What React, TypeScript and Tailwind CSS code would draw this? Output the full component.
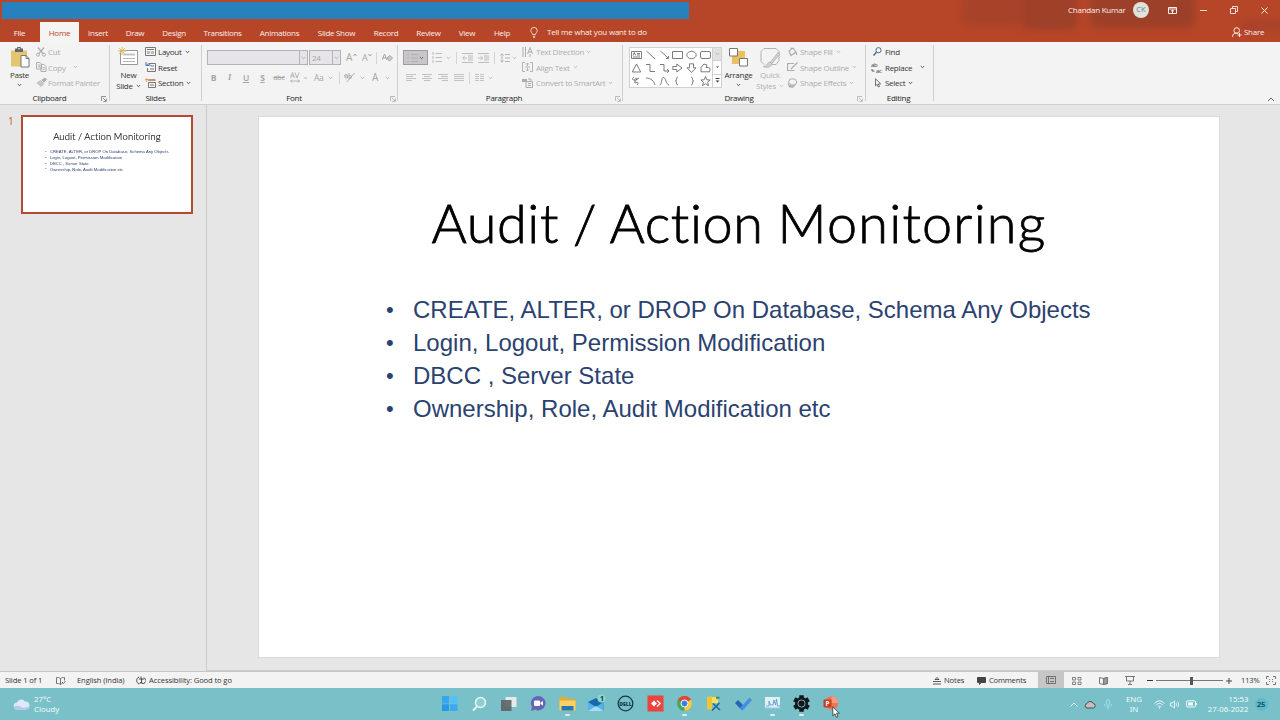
import React from "react";

type Kids = { children?: React.ReactNode; className?: string };

const Svg = ({ w, h, vb, className = "", children }: Kids & { w: number; h: number; vb?: string }) => (
  <svg width={w} height={h} viewBox={vb ?? `0 0 ${w} ${h}`} fill="none" stroke="currentColor" strokeWidth="1" className={`shrink-0 ${className}`}>
    {children}
  </svg>
);

const Chev = ({ className = "" }: { className?: string }) => (
  <Svg w={5} h={4} className={className}><path d="M.8 1 2.5 2.7 4.2 1" strokeWidth=".8" /></Svg>
);

const Launcher = ({ className = "" }: { className?: string }) => (
  <Svg w={6} h={6} className={className}><path d="M.5 5V.5H5M2 2l3 3M5.3 2.5v3h-3" strokeWidth=".8" /></Svg>
);

const Group = ({ className = "", label, labelClass = "", launcher, children }: Kids & { label: string; labelClass?: string; launcher?: string }) => (
  <div className={`flex h-[62px] shrink-0 flex-col ${className}`}>
    <div className="flex h-[51px] w-full">{children}</div>
    <div className="flex h-[11px] w-full items-center">
      <span className={`-mt-[2px] text-center text-[#262626] ${labelClass}`}>{label}</span>
      {launcher && <Launcher className={launcher} />}
    </div>
  </div>
);

const Divider = () => <div className="mt-[3px] h-[56px] w-px shrink-0 bg-[#cfcfcf]" />;

const Line = ({ icon, text, chev, className = "" }: { icon: React.ReactNode; text: string; chev?: string; className?: string }) => (
  <div className={`flex h-[15.5px] items-center ${className}`}>
    <span className="flex w-[12px] shrink-0 items-center">{icon}</span>
    <span>{text}</span>
    {chev && <Chev className={chev} />}
  </div>
);

const tabs: [string, string][] = [
  ["File", "w-[39px]"], ["Home", "w-[39px] bg-[#f6f4f3] text-[#b5462a]"], ["Insert", "w-[38px]"], ["Draw", "w-[36px]"],
  ["Design", "w-[42px]"], ["Transitions", "w-[55px]"], ["Animations", "w-[59px]"], ["Slide Show", "w-[55px]"],
  ["Record", "w-[44px]"], ["Review", "w-[41px]"], ["View", "w-[36px]"], ["Help", "w-[34px]"],
];

function TitleBar() {
  return (
    <div className="relative h-[42px] overflow-hidden bg-[#b74628] font-medium text-[#fdeee9]">
      <div className="absolute left-[962px] top-[-6px] h-[32px] w-[62px] rounded-lg bg-[#a8432a] blur-[3px]" />
      <div className="absolute left-[1022px] top-[-6px] h-[36px] w-[56px] rounded-lg bg-[#9f4029] blur-[3px]" />
      <div className="absolute left-[1090px] top-[-6px] h-[34px] w-[105px] rounded-lg bg-[#9d4029] blur-[3px]" />
      <div className="absolute left-[1240px] top-[20px] h-[12px] w-[50px] rounded-lg bg-[#a8432a] blur-[3px]" />
      <div className="relative flex h-[22px]">
        <div className="ml-[2px] mt-[2px] h-[17px] w-[687px] bg-[#2880bc]" />
        <div className="ml-[379px] flex h-[20px] items-center">
          <span className="w-[65px] text-[8px] tracking-[-0.24px]">Chandan Kumar</span>
          <span className="flex h-[16px] w-[16px] items-center justify-center rounded-full bg-[#dfe3dc] text-[7.5px] text-[#5b8b95]">CK</span>
          <Svg w={9} h={7} className="ml-[19px]"><path d="M.5.5h8v6h-8zM.5 2h8M4.500 6V3M3 4.300 4.500 3 6 4.300" /></Svg>
          <Svg w={7} h={7} className="ml-[23px]"><path d="M0 3.500h7" strokeWidth=".9" /></Svg>
          <Svg w={8} h={8} className="ml-[23px]"><path d="M.5 2.500h5v5h-5zM2.500 2.500v-2h5v5h-2" strokeWidth=".9" /></Svg>
          <Svg w={7} h={7} className="ml-[23px]"><path d="m.5.5 6 6m0-6-6 6" /></Svg>
        </div>
      </div>
      <div className="relative flex h-[20px] text-[8px]">
        {tabs.map(([t, c]) => (
          <span key={t} className={`flex h-[20px] shrink-0 items-center justify-center pt-px tracking-[-0.28px] ${c} ${t === "File" ? "mr-px" : ""}`}>{t}</span>
        ))}
        <div className="ml-[11px] flex h-[20px] w-[698px] items-center">
          <Svg w={8} h={11}><path d="M2.500 7.500C2.500 6 .8 5.500.8 3.600a3.200 3.200 0 0 1 6.400 0c0 1.900-1.700 2.400-1.700 3.900zM2.800 9.300h2.400M3.200 10.500h1.600" strokeWidth=".8" /></Svg>
          <span className="ml-[9px] tracking-[-0.2px]">Tell me what you want to do</span>
        </div>
        <div className="ml-[4px] flex items-center">
          <Svg w={10} h={10}><circle cx="4.700" cy="3.500" r="2.800" /><path d="M.5 9.800c.2-2.500 1.500-3.700 3.500-3.700 1 0 1.600.2 2 .6M7.500 6v4M5.500 8h4" /></Svg>
          <span className="ml-[2px] tracking-[-0.28px]">Share</span>
        </div>
      </div>
    </div>
  );
}

const Align = ({ rows }: { rows: [number, number][] }) => (
  <Svg w={10} h={8} className="mr-[6px] text-[#c2c2c2]">{rows.map(([a, b], i) => <path key={i} d={`M${a} ${i * 2 + 0.5}H${b}`} />)}</Svg>
);

const shapes: React.ReactNode[] = [
  <g><path d="M.5 1.500h10v7h-10zM6 3.500h3M6 5h3M2 7h7" /><path d="m2 5.500 1.300-3 1.300 3" /></g>,
  <path d="m1.500 1 8.500 8" />,
  <path d="m1.500 1 8 7.500M9.500 6v2.500H7" />,
  <path d="M.5 1.500h10v7h-10z" />,
  <ellipse cx="5.500" cy="5" rx="4.700" ry="3.700" />,
  <rect x=".5" y="1.500" width="10" height="7" rx="1.500" />,
  <path d="m5.500 1 4.200 8H1.300z" />,
  <path d="M1 1.500h4v7h5" />,
  <path d="M1 1.500h4v6.500h5M8 6l2 2-2 2" />,
  <path d="M.8 3.500h4V1L10 5 4.800 9V6.500h-4z" />,
  <path d="M3.500.8h4v4H10L5.500 9.500 1 4.800h2.500z" />,
  <path d="M1 8.800V4.500L4 1l3 1-1 2.500h2.500c1.500 0 2 2 1 4.300z" />,
  <path d="M3 1C0 3 2 5 4 3s3 0 1 1.500-2 3 0 2S8 7 6 9M3 5l5-3" />,
  <path d="M1 2c5 0 8 3 9 7" />,
  <path d="M.8 9C3 9 2 1.500 4.500 1.500S7 9 10.200 9" />,
  <path d="M6 1.200c-1.500 0-1.500.8-1.500 1.800 0 1.200 0 2-1.200 2 1.200 0 1.200.8 1.200 2 0 1 0 1.800 1.500 1.800" />,
  <path d="M5 1.200c1.500 0 1.500.8 1.500 1.800 0 1.200 0 2 1.200 2-1.200 0-1.200.8-1.200 2 0 1 0 1.800-1.500 1.800" />,
  <path d="m5.500.5 1.300 3.300 3.400.2-2.600 2.200.9 3.500-3-2-3 2 .9-3.500L.8 4l3.400-.2z" />,
];

function Ribbon() {
  return (
    <div className="flex h-[63px] items-start border-b border-[#d2d0ce] bg-[#f3f3f3] text-[8px] font-medium leading-[11px] tracking-[-0.28px] text-[#333] whitespace-nowrap">
      <Group className="w-[109px]" label="Clipboard" labelClass="ml-[29px] w-[41px]" launcher="ml-[31px] text-[#777]">
        <div className="ml-[4px] flex w-[31px] flex-col items-center pt-[5px]">
          <Svg w={20} h={21}>
            <path d="M1 3.500h16v16H1z" fill="#e5c474" stroke="none" />
            <path d="M5 1.500h2a2 2 0 0 1 4 0h2V5H5z" fill="#666" stroke="none" />
            <circle cx="9" cy="1.700" r=".8" fill="#fff" stroke="none" />
            <path d="M11 8.500h5l3 3v8.500h-8z" fill="#fff" stroke="#777" /><path d="M16 8.500v3h3" stroke="#777" />
          </Svg>
          <span className="mt-px">Paste</span>
          <Chev className="mt-[3px]" />
        </div>
        <div className="ml-px mt-[2px] w-[70px] text-[#adadad]">
          <Line text="Cut" icon={<Svg w={10} h={10}><path d="m2 .5 5 6M8 .5l-5 6" strokeWidth="1.300" /><circle cx="2" cy="7.700" r="1.500" /><circle cx="8" cy="7.700" r="1.500" /></Svg>} />
          <Line text="Copy" chev="ml-[7px]" icon={<Svg w={11} h={10}><path d="M.5.500h3.500l1.500 1.500v5h-5zM5 2.500h3l2 2v5H5zM2 3h2M2 4.800h2M6.500 5.500h2M6.500 7.300h2" /></Svg>} />
          <Line text="Format Painter" icon={<Svg w={11} h={9}><path d="m6 2 3-2 1.500 1.500L8 4z" fill="currentColor" /><path d="m4.500 2.500 3.500 3-3 3L1 5z" fill="currentColor" fillOpacity=".6" strokeWidth=".6" /></Svg>} />
        </div>
      </Group>
      <Divider />
      <Group className="w-[91px]" label="Slides" labelClass="ml-[33px] w-[25px]">
        <div className="ml-[3px] flex w-[31px] flex-col items-center pt-[5px]">
          <Svg w={21} h={19}>
            <path d="M2.500 3.500h17v14h-17z" fill="#fff" stroke="#999" />
            <path d="M5 6.500h12v2H5z" fill="#c4c4c4" stroke="none" />
            <path d="M5 11.500h12M5 14.500h12" stroke="#b5b5b5" />
            <path d="M4 0v8M0 4h8M1.200 1.200l5.600 5.600M6.800 1.200 1.200 6.800" stroke="#e5bd5c" />
          </Svg>
          <span className="mt-[3px]">New</span>
          <span className="flex items-center">Slide<Chev className="ml-[3px]" /></span>
        </div>
        <div className="ml-px mt-[2px] w-[55px]">
          <Line text="Layout" chev="ml-[3px]" className="[&>span:first-child]:w-[13px]" icon={<Svg w={11} h={9} className="text-[#777]"><path d="M.5.500h10v8H.5zM2 2.500h7" /><path d="M2 4h3v3H2zM6 4h3v3H6z" fill="#bbb" stroke="none" /></Svg>} />
          <Line text="Reset" className="[&>span:first-child]:w-[13px]" icon={<Svg w={11} h={10} className="text-[#777]"><path d="M4 1.500h6.500v8h-8V6M6 4h3M5 7h4" /><path d="M1 0v3.500h3.500M1.200 3.300C2.500 1.500 5 1.500 6 4" stroke="#3a7ab8" /></Svg>} />
          <Line text="Section" chev="ml-[3px]" className="[&>span:first-child]:w-[13px]" icon={<Svg w={11} h={10}><path d="M3.500 4.500h7v5h-7zM5 7h4" stroke="#777" /><path d="M3 2h7.500" stroke="#c46a4a" strokeWidth="1.500" /><path d="M1.500 0v4M0 1.500h3.500" stroke="#e5a45c" /></Svg>} />
        </div>
      </Group>
      <Divider />
      <Group className="w-[195px] text-[#a6a6a6]" label="Font" labelClass="ml-[81px] w-[22px]" launcher="ml-[85px]">
        <div className="ml-[5px] flex w-[188px] flex-col pt-[8px]">
          <div className="flex h-[15px] items-center">
            <div className="flex h-[15px] w-[101px] justify-end border border-[#b3b1b5] bg-[#e6e4e8]"><div className="flex w-[8px] items-center justify-center border-l border-[#b3b1b5]"><Chev /></div></div>
            <div className="ml-px flex h-[15px] w-[32px] items-center justify-between border border-[#b3b1b5] bg-[#e6e4e8] pl-[2px]"><span>24</span><div className="flex h-full w-[8px] items-center justify-center border-l border-[#b3b1b5]"><Chev /></div></div>
            <span className="ml-[5px] w-[7px] text-[10px]">A</span><Svg w={4} h={4} className="mb-[6px]"><path d="M.5 3 2 1l1.500 2" /></Svg>
            <span className="ml-[5px] w-[6px] text-[9px]">A</span><Svg w={4} h={4} className="mb-[6px]"><path d="M.5 1 2 3l1.500-2" /></Svg>
            <div className="ml-[4px] h-[12px] w-px bg-[#d5d5d5]" />
            <Svg w={11} h={10} className="ml-[5px]"><path d="m0 7 2.500-6L5 7M1 5h3" /><path d="m5 5 3-2.500 2.500 2.500-3 3.200z" fill="currentColor" fillOpacity=".5" /></Svg>
          </div>
          <div className="mt-[5px] flex h-[15px] items-center text-[8.500px]">
            <b className="w-[13px] text-center">B</b>
            <i className="ml-px w-[17px] text-center font-['Liberation_Serif',serif] font-bold">I</i>
            <u className="w-[16px] text-center font-semibold">U</u>
            <b className="w-[17px] text-center underline">S</b>
            <s className="w-[16px] text-center text-[7.500px]">abc</s>
            <Svg w={10} h={11} className="ml-[3px]"><path d="m.5 6 2-5.500L4.500 6M1 4h3M5 .5 7 6 9 .5M.5 9h9M2 7.500.5 9 2 10.500M8 7.500 9.500 9 8 10.500" strokeWidth=".8" /></Svg>
            <Chev className="ml-[3px]" />
            <span className="ml-[6px] w-[11px]">Aa</span><Chev className="ml-[3px]" />
            <div className="ml-[6px] h-[12px] w-px bg-[#d5d5d5]" />
            <Svg w={11} h={11} className="ml-[4px]"><path d="M.5 4a1.500 1.500 0 1 1 3 0v2M3.500 4.500a1.500 1 0 1 0 0 1M5 1v5.500M5 4a1.500 1.500 0 1 1 0 2M10.500 1 6 6l-3 4" strokeWidth=".9" /></Svg>
            <Chev className="ml-[5px]" />
            <span className="ml-[7px] w-[7px] text-[10px]">A</span><Chev className="ml-[6px]" />
          </div>
        </div>
      </Group>
      <Divider />
      <Group className="w-[224px] text-[#adadad]" label="Paragraph" labelClass="ml-[87px] w-[38px]" launcher="ml-[92px]">
        <div className="ml-[5px] flex w-[119px] flex-col pt-[8px]">
          <div className="flex h-[15px] items-center">
            <div className="flex h-[15px] w-[25px] items-center justify-between border border-[#9d9d9d] bg-[#c8c6c8] px-[3px] text-[#555]"><Svg w={11} h={10} className="text-[#b0b0b0]"><path d="M0 1.500h2M4 1.500h7M0 5h2M4 5h7M0 8.500h2M4 8.500h7" /></Svg><Chev /></div>
            <Svg w={10} h={11} className="ml-[4px] text-[#bcbcbc]"><path d="M1 0v3M1 4.200v3M1 8.200v3M3.500 1.500h6.500M3.500 5.500h6.500M3.500 9.500h6.500" /></Svg>
            <Chev className="ml-[4px]" />
            <div className="ml-[5px] h-[12px] w-px bg-[#d5d5d5]" />
            <Svg w={11} h={10} className="ml-[5px] text-[#bcbcbc]"><path d="M0 .5h11M6 3h5M6 5h5M6 7h5M0 9.500h11M5 5H1M2.500 3.200.7 5l1.800 1.800" /></Svg>
            <Svg w={11} h={10} className="ml-[5px] text-[#bcbcbc]"><path d="M0 .5h11M6 3h5M6 5h5M6 7h5M0 9.500h11M0 5h4.500M2.800 3.200 4.600 5 2.800 6.800" /></Svg>
            <div className="ml-[5px] h-[12px] w-px bg-[#d5d5d5]" />
            <Svg w={10} h={10} className="ml-[5px] text-[#b4b4b4]"><path d="M2 .8v8.400M.5 2.500 2 .8l1.500 1.700M.5 7.500 2 9.200l1.500-1.700M5 1.500h5M5 5h5M5 8.500h5" /></Svg>
            <Chev className="ml-[2px]" />
          </div>
          <div className="mt-[5px] flex h-[15px] items-center pl-[3px]">
            <Align rows={[[0, 10], [0, 7], [0, 10], [0, 6]]} />
            <Align rows={[[0, 10], [2, 8], [0, 10], [2, 8]]} />
            <Align rows={[[0, 10], [3, 10], [0, 10], [4, 10]]} />
            <Align rows={[[0, 10], [0, 10], [0, 10], [0, 10]]} />
            <div className="-ml-px h-[12px] w-px bg-[#d5d5d5]" />
            <Svg w={9} h={8} className="ml-[5px] text-[#c2c2c2]"><path d="M0 .5h4M5 .5h4M0 2.500h4M5 2.500h4M0 4.500h4M5 4.500h4M0 6.500h4M5 6.500h4" /></Svg>
            <Chev className="ml-[4px]" />
          </div>
        </div>
        <div className="mt-[2px]">
          <Line text="Text Direction" chev="ml-[2px]" className="[&>span:first-child]:w-[14px]" icon={<Svg w={11} h={10}><path d="M1 0v10M3.500 0v10M5.500 7 8 .5 10.500 7M6 5h4M8 7v3" /></Svg>} />
          <Line text="Align Text" chev="ml-[3px]" className="[&>span:first-child]:w-[14px]" icon={<Svg w={11} h={10}><path d="M3 .5H.5v9H3M8 .5h2.500v9H8M3 5h5M5.500 1v3M4 2.500 5.500 1 7 2.500M5.500 9V6M4 7.500 5.500 9 7 7.500" strokeWidth=".9" /></Svg>} />
          <Line text="Convert to SmartArt" chev="ml-[3px]" className="[&>span:first-child]:w-[14px]" icon={<Svg w={11} h={10}><path d="M0 1h5v3H0z" fill="currentColor" stroke="none" /><path d="M4 3.500h6.500v6H4zM6 1h3v2M6 5.500h3M6 7.500h3" /></Svg>} />
        </div>
      </Group>
      <Divider />
      <Group className="w-[242px]" label="Drawing" labelClass="ml-[100px] w-[32px]" launcher="ml-[102px] text-[#adadad]">
        <div className="ml-[6px] mt-[5px] flex h-[41px] w-[93px] border border-[#d0d0d0] bg-white">
          <div className="grid w-[82px] grid-cols-6 grid-rows-3 place-items-center text-[#666]">
            {shapes.map((s, i) => <Svg key={i} w={11} h={10} className="[stroke-width:.85px]">{s}</Svg>)}
          </div>
          <div className="flex flex-1 flex-col border-l border-[#d0d0d0] text-[#444]">
            <div className="flex flex-1 items-center justify-center bg-[#e1e0e2] text-[#aaa]"><Chev /></div>
            <div className="flex flex-1 items-center justify-center border-y border-[#d0d0d0]"><Svg w={5} h={3}><path d="M1 .5h3L2.500 2z" fill="currentColor" stroke="none" /></Svg></div>
            <div className="flex flex-1 items-center justify-center"><Svg w={5} h={5}><path d="M.5.500h4" /><path d="M.5 2.500h4l-2 2z" fill="currentColor" stroke="none" /></Svg></div>
          </div>
        </div>
        <div className="ml-[2px] flex w-[29px] flex-col items-center pt-[6px]">
          <Svg w={19} h={19}>
            <path d="M6 3h10v9H6zM3 8h8v8H3z" fill="#e8c160" stroke="none" />
            <path d="M.5.500h8v7.500h-8zM10.500 10.500h8v7.500h-8z" fill="#fff" stroke="#777" />
          </Svg>
          <span className="mt-[2px]">Arrange</span>
          <Chev className="mt-[3px]" />
        </div>
        <div className="ml-[2px] flex w-[30px] flex-col items-center pt-[5px] text-[#b2b2b2]">
          <Svg w={20} h={21}><path d="M4 1.500h12l3 3v9l-3 4h-4M4 1.500l-3 3v10l3 3" /><path d="m18.500 5-8 10 1.500 1.500 7.500-9zM10 15c-3 0-2 4-7 4.500 3 1.500 8 1 9-2.500z" fill="#d0d0d0" strokeWidth=".8" /></Svg>
          <span className="mt-px">Quick</span>
          <span className="flex items-center">Styles<Chev className="ml-[3px]" /></span>
        </div>
        <div className="ml-[2px] mt-[2px] text-[#adadad]">
          <Line text="Shape Fill" chev="ml-[3px]" className="[&>span:first-child]:w-[13px]" icon={<Svg w={11} h={10}><path d="m2 4 4-3 3 4-5 3.500zM4 3V.5M9.500 5.500v2.500" strokeWidth="1.200" /></Svg>} />
          <Line text="Shape Outline" chev="ml-[3px]" className="[&>span:first-child]:w-[13px]" icon={<Svg w={11} h={10}><path d="M7 1.500H.5v7h7M10.500.5 6 5l-2 2" strokeWidth="1.200" /></Svg>} />
          <Line text="Shape Effects" chev="ml-[3px]" className="[&>span:first-child]:w-[13px]" icon={<Svg w={11} h={10}><path d="M3 1h5l2 3-2 3H4L1.500 4z" /><path d="M1 5c1 3 5 4 8 1L6 9.500 2 9z" fill="currentColor" strokeWidth=".5" /></Svg>} />
        </div>
      </Group>
      <Divider />
      <Group className="w-[67px]" label="Editing" labelClass="ml-[19px] w-[27px]">
        <div className="ml-[7px] mt-[2px]">
          <Line text="Find" icon={<Svg w={9} h={9}><circle cx="5.500" cy="3.200" r="2.600" stroke="#3f6c9c" /><path d="M3.500 5.200.5 8.500" stroke="#3f6c9c" strokeWidth="1.500" /></Svg>} />
          <Line text="Replace" chev="ml-[8px]" icon={<Svg w={12} h={11} className="-ml-[2px] overflow-visible"><text x="0" y="4.500" fontSize="6" fill="currentColor" stroke="none">ab</text><text x="5" y="10.500" fontSize="6" fill="currentColor" stroke="none">ac</text><path d="M1 7v2h2.500" strokeWidth=".8" /></Svg>} />
          <Line text="Select" chev="ml-[3px]" icon={<Svg w={9} h={10}><path d="M2.500.8v7l1.700-1.500 1 2.700 1.300-.5-1.100-2.600h2.300z" stroke="#555" strokeWidth=".8" /></Svg>} />
        </div>
      </Group>
      <Divider />
      <Svg w={8} h={5} className="ml-[333px] mt-[55px] text-[#555]"><path d="M1 4l3-3 3 3" strokeWidth=".9" /></Svg>
    </div>
  );
}

const points = [
  "CREATE, ALTER, or DROP On Database, Schema Any Objects",
  "Login, Logout, Permission Modification",
  "DBCC , Server State",
  "Ownership, Role, Audit Modification etc",
];

const Slide = () => (
  <div className="h-[540px] w-[960px] bg-white pt-[71px]">
    <h1 className="h-[70px] whitespace-nowrap text-center font-['Lato',sans-serif] text-[54px] font-light leading-[70px] tracking-[0.6px] text-black [-webkit-text-stroke:0.8px_black] [font-variant-ligatures:none] [word-spacing:-1.2px]">Audit / Action <span className="tracking-[1.2px]">Monitoring</span></h1>
    <ul className="ml-[127px] mt-[35px] font-['Liberation_Sans',Arial,sans-serif] text-[24px] text-[#2b4270]">
      {points.map((p) => (
        <li key={p} className="flex h-[33px] items-center whitespace-nowrap"><span className="w-[27px] shrink-0 text-[22px]">•</span>{p}</li>
      ))}
    </ul>
  </div>
);

function StatusBar() {
  return (
    <div className="flex h-[17px] items-center border-t border-[#c6c6c6] bg-[#f3f3f3] pt-px text-[7.600px] font-medium tracking-[-0.11px] text-[#333] whitespace-nowrap">
      <span className="ml-[5px] w-[51px]">Slide 1 of 1</span>
      <Svg w={10} h={8} className="text-[#666]"><path d="M4.500 7.500V1.500C3.500.5 2 .5.5.5v6c1.500 0 3 0 4 1 .5-.6 1-.9 2-1M4.500 1.500C5.500.5 7 .5 8.500.5v3M6 5l1.500 1.500L9.500 4" strokeWidth=".9" /></Svg>
      <span className="ml-[11px] w-[59px]">English (India)</span>
      <Svg w={10} h={9}><path d="M3 1C0 2 0 7 3 8M5 .5v2M3 3h5M5.500 3v3M3.500 8 5 6l1.500 2M8 1.500c1 1 1.500 2 1.500 3M6 6.500 7.500 8l2-2.500" strokeWidth=".9" /></Svg>
      <span className="ml-[3px] w-[784px]">Accessibility: Good to go</span>
      <Svg w={8} h={8}><path d="M2 2.500h4L4 .5zM0 4.500h8M0 7h8" strokeWidth=".8" /></Svg>
      <span className="ml-[3px] w-[33px]">Notes</span>
      <Svg w={9} h={8}><path d="M.5.500h8v5H4L2.500 7.500v-2h-2z" fill="#444" stroke="#444" /></Svg>
      <span className="ml-[3px] w-[49px] tracking-[-0.2px]">Comments</span>
      <div className="-mt-px flex h-[16px] w-[26px] items-center justify-center bg-[#c6c6c6] text-[#666]"><Svg w={10} h={8}><path d="M.5.500h9v7h-9zM2.500.5v7M4 2.500h4M4 5.500h4" strokeWidth=".9" /></Svg></div>
      <Svg w={10} h={8} className="ml-[8px] text-[#777]"><path d="M.5.500h3v2.500h-3zM6 .5h3v2.500H6zM.5 5h3v2.500h-3zM6 5h3v2.500H6z" strokeWidth=".9" /></Svg>
      <Svg w={9} h={8} className="ml-[17px] text-[#777]"><path d="M4.500 7.500V1.500L.5.500v6zM4.500 1.500l4-1v6l-4 1" /><path d="M4.500 1.500l4-1v6l-4 1z" fill="#999" /></Svg>
      <Svg w={10} h={9} className="ml-[17px] text-[#777]"><path d="M0 .5h10M1.500.5V5h7V.5M5 5v3M3 8.500h4" /></Svg>
      <Svg w={6} h={5} className="ml-[12px]"><path d="M0 2.500h6" /></Svg>
      <div className="ml-[3px] flex h-[8px] w-[67px] items-center justify-center bg-[linear-gradient(#777,#777)] bg-[length:100%_1px] bg-center bg-no-repeat"><div className="ml-[4px] h-[8px] w-[3px] bg-[#555]" /></div>
      <Svg w={6} h={6} className="ml-[3px]"><path d="M0 3h6M3 0v6" strokeWidth=".9" /></Svg>
      <span className="ml-[9px] w-[25px] text-[7.500px]">113%</span>
      <Svg w={10} h={9} className="text-[#777]"><path d="M.5 3V.5H3M7 .5h2.500V3M9.500 6v2.500H7M3 8.500H.5V6M3 3l1 1M7 3 6 4M3 6l1-1M7 6 6 5" /></Svg>
    </div>
  );
}

const apps: { name: string; open?: boolean; art: React.ReactNode }[] = [
  { name: "start", art: <><path d="M1 2h7v7.500H1z" fill="#35a8ee" /><path d="M9 2h7.500v7.500H9z" fill="#52c1f5" /><path d="M1 10.300h7V17H1z" fill="#2798e6" /><path d="M9 10.300h7.500V17H9z" fill="#37aaf0" /></> },
  { name: "search", art: <g fill="#9dd5dc" fillOpacity=".6" stroke="#e9f5f6" strokeWidth="1.500"><circle cx="10.500" cy="8.500" r="5" /><path d="m7 12.500-4 4" strokeWidth="2" /></g> },
  { name: "tasks", art: <><path d="M6.500 3h11v10h-11z" fill="#e6eaea" /><path d="M2 6h10.500v11H2z" fill="#5d6466" fillOpacity=".9" /></> },
  { name: "chat", art: <><path d="M9.500 2a7.200 7.200 0 1 1-3.500 13.600L2 17l1-4A7.300 7.300 0 0 1 9.500 2z" fill="#6565b8" /><rect x="5" y="6.500" width="6" height="5.500" rx="1" fill="#fff" /><path d="m11.500 8.500 2.500-1.500v4.500L11.500 10z" fill="#fff" /></> },
  { name: "files", open: true, art: <><path d="M1.500 3h6l1.500 2h8.500v11.500h-16z" fill="#e9a929" /><path d="M1.500 6.500h16v10h-16z" fill="#fad166" /><path d="M3.500 12h12v4.500h-12z" fill="#2478b8" /></> },
  { name: "mail", art: <><path d="m1 8 8-4 7.500 4v9H1z" fill="#1769ac" /><path d="m1 8 8 5 7.500-5v9H1z" fill="#54b4e9" /><path d="m1 17 8-5 7.500 5z" fill="#a5dcf2" /><circle cx="14.500" cy="4.500" r="4" fill="#8ad7cd" /><text x="13" y="7" fontSize="7" fontWeight="700" fill="#093e45">1</text></> },
  { name: "dell", art: <><circle cx="9.500" cy="9.500" r="7.300" fill="none" stroke="#133b46" strokeWidth="1.300" /><text x="9.500" y="11.500" textAnchor="middle" fontSize="5.200" fontWeight="900" fill="#133b46">DELL</text></> },
  { name: "remote", art: <><path d="M1.500 1.500h16v16h-16z" fill="#ed443d" /><path d="m8 6.500 3 3-3 3-3-3z" fill="#fff" /><path d="m11 6.500 3.200 3-3.200 3" fill="none" stroke="#fff" strokeWidth="1.300" /></> },
  { name: "chrome", open: true, art: <><circle cx="9.500" cy="9.500" r="7.500" fill="#45a85b" /><path d="M9.500 9.500 3 5.800a7.500 7.500 0 0 1 13-0z" fill="#e54536" /><path d="M9.500 9.500 16 5.800a7.500 7.500 0 0 1-6.500 11.200z" fill="#f6cb3d" /><circle cx="9.500" cy="9.500" r="3.500" fill="#3e7de0" stroke="#fff" /></> },
  { name: "tools", art: <><path d="M3 3 8 2v14l-5-1z" fill="#edc536" /><path d="M8 3h6v6H8z" fill="#f5e05d" /><path d="m9 9.500 7 6.500M15.500 9 8 16.500" stroke="#21669d" strokeWidth="1.600" /><path d="m12 4 3.500-.5" stroke="#3f8f5f" strokeWidth="2" /></> },
  { name: "todo", art: <><path d="m1 9 3-3 5 5-3 3.500z" fill="#2465b4" /><path d="m6 14.500 9.500-11 2.500 2.500L9 16c-1 1-2 0-3-1.500z" fill="#438de7" /></> },
  { name: "monitor", open: true, art: <><path d="M2 3h15v12H2z" fill="#e2f1f7" /><path d="M2 13.500h15V15H2z" fill="#8fc3dd" /><path d="M3 12h3V7l1.500 4H10l1-5 1.500 5 1-6 1 7H17" fill="none" stroke="#5a9fcb" strokeWidth=".9" /></> },
  { name: "settings", open: true, art: <><circle cx="9.500" cy="9.500" r="6.500" fill="#10181a" /><path d="M9.500 1.200v16.600M2.300 5.300l14.400 8.400M16.700 5.300 2.300 13.700" stroke="#10181a" strokeWidth="4.500" /><circle cx="9.500" cy="9.500" r="3.600" fill="#10181a" stroke="#7baeb5" /></> },
  { name: "slides", art: <><circle cx="9.500" cy="9" r="6.800" fill="#ed765a" /><path d="M9.500 2.200A6.800 6.800 0 0 1 16.300 9H9.500z" fill="#f79a7c" /><rect x="1.500" y="5.500" width="8" height="8" rx="1" fill="#c53d22" /><text x="3.500" y="12" fontSize="6.500" fontWeight="700" fill="#fff">P</text></> },
];

function TaskBar() {
  return (
    <div className="flex h-[32px] items-center bg-[#79c0c8] font-['Noto_Sans','Open_Sans',sans-serif] text-[7.800px] leading-[10.500px] text-[#f2fbfc] whitespace-nowrap">
      <Svg w={17} h={12} className="ml-[13px]"><path d="M4.500 11.500a3.500 3.500 0 0 1-.5-7 4.500 4.500 0 0 1 8-1 4 4 0 0 1 1 8z" fill="#dfe7f8" stroke="none" /><path d="M1 9c2-2 5-1 7 0s5 1 8-1c0 2-1.500 3.500-3.500 3.500h-8C2.500 11.500 1 10.500 1 9z" fill="#b9c8e9" stroke="none" /></Svg>
      <div className="ml-[4px] w-[401.500px]">27°C<br />Cloudy</div>
      <div className="flex w-[632.500px]">
        {apps.map((a) => (
          <div key={a.name} className="flex h-[32px] w-[29.300px] shrink-0 flex-col items-center pt-[6px]">
            <svg width="19" height="19" viewBox="0 0 19 19" stroke="none">{a.art}</svg>
            {a.open && <div className="mt-px h-[2px] w-[5px] rounded-full bg-[#d8eff1]" />}
          </div>
        ))}
      </div>
      <Svg w={8} h={5} className="ml-[2px]"><path d="m.5 4.500 3.500-3.500 3.500 3.500" /></Svg>
      <Svg w={12} h={9} className="ml-[6px]"><path d="M3 8a2.300 2.300 0 0 1 0-4.500 3.500 3.500 0 0 1 6.300 0A2.300 2.300 0 0 1 9.500 8z" fill="#cdbcbc" stroke="#3a5459" /></Svg>
      <Svg w={8} h={11} className="ml-[8px] text-[#9bdcf1]"><rect x="2.500" y=".5" width="3" height="6" rx="1.500" /><path d="M.5 5c0 4 7 4 7 0M4 8v2.500" /></Svg>
      <div className="ml-[13px] w-[18px] text-center">ENG<br />IN</div>
      <Svg w={11} h={9} className="ml-[11px]"><path d="M.5 3.500c3-3.500 7-3.500 10 0M2 5.300c2-2.500 5-2.500 7 0M3.800 7c1-1.300 2.400-1.300 3.400 0" /><circle cx="5.500" cy="8" r=".7" fill="currentColor" stroke="none" /></Svg>
      <Svg w={10} h={9} className="ml-[5px]"><path d="M.5 3H2l2.500-2v7L2 6H.5zM6 3c.8 1 .8 2 0 3M7.500 1.700c1.500 2 1.500 3.600 0 5.600" strokeWidth=".9" /></Svg>
      <Svg w={11} h={8} className="ml-[6px]"><rect x=".5" y=".8" width="9" height="6.200" rx="1.200" /><path d="M2 2.300h5v3.200H2z" fill="currentColor" stroke="none" /><path d="M10.500 3v2" /></Svg>
      <div className="w-[51.500px] text-right">15:53<br />27-06-2022</div>
      <div className="ml-[6px] flex h-[13px] w-[13px] items-center justify-center rounded-full bg-[#62b9c8] text-[7.500px] font-semibold tracking-[-0.2px] text-[#0f4656]">25</div>
    </div>
  );
}

export default function App() {
  return (
    <div className="relative flex h-[720px] w-[1280px] flex-col overflow-hidden bg-[#e6e6e6] font-['Open_Sans','Noto_Sans',sans-serif]">
      <TitleBar />
      <Ribbon />
      <div className="flex h-[566px]">
        <div className="flex w-[206px] items-start pt-[10px]">
          <span className="w-[21px] pl-[8px] text-[10px] leading-[12px] text-[#d0573a]">1</span>
          <div className="h-[99px] w-[172px] overflow-hidden border-2 border-[#b24a34] bg-white pt-px">
            <div className="h-[540px] w-[960px] origin-top-left scale-[0.175]"><Slide /></div>
          </div>
        </div>
        <div className="flex-1 border-b border-l border-[#cbcbcb] pl-[51px] pt-[11px]">
          <div className="h-[542px] w-[962px] border border-[#dadada]"><Slide /></div>
        </div>
      </div>
      <StatusBar />
      <TaskBar />
      <svg width="8" height="12" viewBox="0 0 8 12" className="absolute left-[832px] top-[706px]"><path d="M.8.800v9l2.200-2 1.500 3.500 1.500-.7L4.600 7.200h2.800z" fill="#fff" stroke="#333" strokeWidth=".8" /></svg>
    </div>
  );
}
